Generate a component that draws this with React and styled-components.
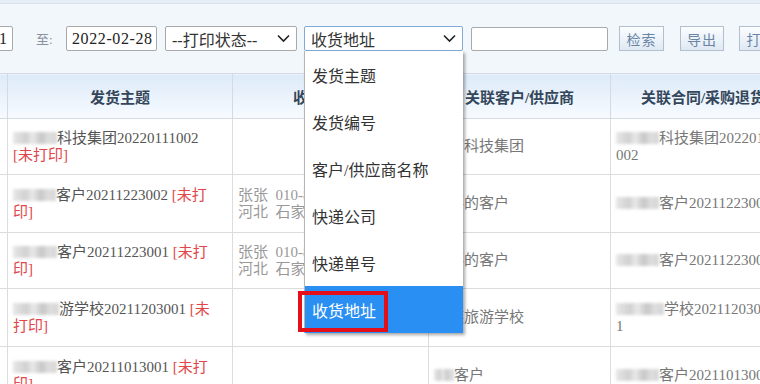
import React from "react";
import styled, { createGlobalStyle } from "styled-components";

const Global = createGlobalStyle`
  html, body { margin: 0; padding: 0; }
  body {
    font-family: "Liberation Serif", "Noto Sans CJK SC", serif;
    background: #f2f7fc;
  }
`;

const Page = styled.div`
  width: 760px;
  height: 384px;
  overflow: hidden;
  background: #f2f7fc;
`;

const TopStrip = styled.div`
  height: 3px;
  background: #e6edf5;
  border-bottom: 1px solid #d9e2ec;
`;

const Toolbar = styled.div`
  display: flex;
  align-items: center;
  height: 25px;
  margin: 22px 0 22px -78px;
  white-space: nowrap;
  & > * { flex-shrink: 0; }
`;

const Field = styled.div`
  box-sizing: border-box;
  width: ${(p) => p.w}px;
  height: ${(p) => p.h || 25}px;
  margin-left: ${(p) => p.ml || 0}px;
  display: flex;
  align-items: center;
  justify-content: ${(p) => (p.end ? "flex-end" : "flex-start")};
  padding: 0 5px;
  background: #fff;
  border: 1px solid #a9a9a9;
  border-radius: 2px;
  font-size: 16px;
  letter-spacing: ${(p) => p.ls || 0}px;
  color: #222;
`;

const Label = styled.span`
  margin-left: 23px;
  width: 22px;
  font-size: 13px;
  color: #8c939c;
`;

const SelectWrap = styled.div`
  position: relative;
  margin-left: ${(p) => p.ml}px;
`;

const Select = styled.div`
  box-sizing: border-box;
  width: ${(p) => p.w}px;
  height: 25px;
  display: flex;
  align-items: center;
  justify-content: space-between;
  padding: 0 6px;
  background: #fff;
  border: 1px solid ${(p) => (p.focus ? "#84a9d6" : "#a9a9a9")};
  border-radius: 2px;
  font-size: 16px;
  color: #333;
`;

const Chevron = () => (
  <svg width="13" height="9" viewBox="0 0 13 9">
    <path d="M1 1.5 L6.5 7 L12 1.5" fill="none" stroke="#222" strokeWidth="1.6" />
  </svg>
);

const Menu = styled.div`
  position: absolute;
  top: 25px;
  left: 0;
  width: 158px;
  background: #fff;
  border-left: 1px solid #b5b5b5;
  box-shadow: 2px 2px 3px rgba(0, 0, 0, 0.35);
  z-index: 5;
`;

const MenuItem = styled.div`
  position: relative;
  height: 47px;
  display: flex;
  align-items: center;
  padding-left: 7px;
  font-size: 16px;
  color: ${(p) => (p.active ? "#fff" : "#333")};
  background: ${(p) => (p.active ? "#2a8ff2" : "#fff")};
`;

const Mark = styled.div`
  position: absolute;
  left: -7px;
  top: 5px;
  width: 90px;
  height: 41px;
  box-sizing: border-box;
  border: 4px solid #e3101c;
`;

const Button = styled.div`
  box-sizing: border-box;
  height: 25px;
  width: ${(p) => p.w}px;
  margin-left: ${(p) => p.ml}px;
  display: flex;
  align-items: center;
  justify-content: center;
  border: 1px solid #b3bfcc;
  background: linear-gradient(#fbfdff, #dfe9f4);
  font-size: 14px;
  color: #6a84a3;
  letter-spacing: 1px;
`;

const Table = styled.table`
  margin-left: -40px;
  border-collapse: collapse;
  table-layout: fixed;
  width: 850px;
  background: #fff;
  font-size: 15px;
`;

const Th = styled.th`
  height: 44px;
  padding: 0;
  border: 1px solid #d3dae2;
  background: linear-gradient(#ddeaf9, #f7fbff);
  font-size: 15px;
  font-weight: bold;
  color: #34465a;
  text-align: center;
`;

const Tr = styled.tr`
  height: ${(p) => p.h}px;
`;

const Td = styled.td`
  padding: 0 5px;
  border: 1px solid #dcdcdc;
  vertical-align: middle;
  line-height: 17px;
  color: ${(p) => p.c || "#555"};
  white-space: nowrap;
  overflow: hidden;
`;

const Red = styled.span`
  color: #e0464a;
`;

const Blur = styled.span`
  display: inline-block;
  width: ${(p) => p.w}px;
  height: 12px;
  vertical-align: -1px;
  background: linear-gradient(90deg, #e3e3e3, #c9c9c9 30%, #e6e6e6 45%, #bdbdbd 65%, #d8d8d8 80%, #cfcfcf);
  filter: blur(1.6px);
  opacity: 0.85;
`;

const options = ["发货主题", "发货编号", "客户/供应商名称", "快递公司", "快递单号", "收货地址"];

export default function App() {
  return (
    <Page>
      <Global />
      <TopStrip />
      <Toolbar>
        <Field w={91} end>2022-01-01</Field>
        <Label>至:</Label>
        <Field w={91} ml={8} ls={0.6}>2022-02-28</Field>
        <SelectWrap ml={8}>
          <Select w={132}>
            <span>--打印状态--</span>
            <Chevron />
          </Select>
        </SelectWrap>
        <SelectWrap ml={7}>
          <Select w={159} focus>
            <span>收货地址</span>
            <Chevron />
          </Select>
          <Menu>
            {options.map((o, i) => (
              <MenuItem key={o} active={i === options.length - 1}>
                {o}
                {i === options.length - 1 && <Mark />}
              </MenuItem>
            ))}
          </Menu>
        </SelectWrap>
        <Field w={137} h={24} ml={8} />
        <Button w={45} ml={11}>检索</Button>
        <Button w={44} ml={16}>导出</Button>
        <Button w={45} ml={15}>打印</Button>
      </Toolbar>
      <Table>
        <colgroup>
          <col style={{ width: 47 }} />
          <col style={{ width: 225 }} />
          <col style={{ width: 196 }} />
          <col style={{ width: 182 }} />
          <col style={{ width: 200 }} />
        </colgroup>
        <thead>
          <tr>
            <Th />
            <Th>发货主题</Th>
            <Th>收货人信息</Th>
            <Th>关联客户/供应商</Th>
            <Th>关联合同/采购退货单</Th>
          </tr>
        </thead>
        <tbody>
          <Tr h={56}>
            <Td />
            <Td>
              <Blur w={44} />科技集团20220111002<br />
              <Red>[未打印]</Red>
            </Td>
            <Td />
            <Td c="#777">磐石科技集团</Td>
            <Td c="#777">
              <Blur w={43} />科技集团20220111<br />002
            </Td>
          </Tr>
          <Tr h={58}>
            <Td />
            <Td>
              <Blur w={43} />客户20211223002 <Red>[未打</Red><br />
              <Red>印]</Red>
            </Td>
            <Td c="#999">
              张张&nbsp; 010-88886666<br />河北&nbsp; 石家庄市
            </Td>
            <Td c="#777">重要的客户</Td>
            <Td c="#777">
              <Blur w={43} />客户20211223002
            </Td>
          </Tr>
          <Tr h={56}>
            <Td />
            <Td>
              <Blur w={44} />客户20211223001 <Red>[未打</Red><br />
              <Red>印]</Red>
            </Td>
            <Td c="#999">
              张张&nbsp; 010-88886666<br />河北&nbsp; 石家庄市
            </Td>
            <Td c="#777">重要的客户</Td>
            <Td c="#777">
              <Blur w={43} />客户20211223001
            </Td>
          </Tr>
          <Tr h={58}>
            <Td />
            <Td>
              <Blur w={46} />游学校20211203001 <Red>[未</Red><br />
              <Red>打印]</Red>
            </Td>
            <Td />
            <Td c="#777">某某旅游学校</Td>
            <Td c="#777">
              <Blur w={48} />学校2021120300<br />1
            </Td>
          </Tr>
          <Tr h={58}>
            <Td />
            <Td>
              <Blur w={44} />客户20211013001 <Red>[未打</Red><br />
              <Red>印]</Red>
            </Td>
            <Td />
            <Td c="#777">
              <Blur w={20} />客户
            </Td>
            <Td c="#777">
              <Blur w={43} />客户20211013001
            </Td>
          </Tr>
        </tbody>
      </Table>
    </Page>
  );
}
